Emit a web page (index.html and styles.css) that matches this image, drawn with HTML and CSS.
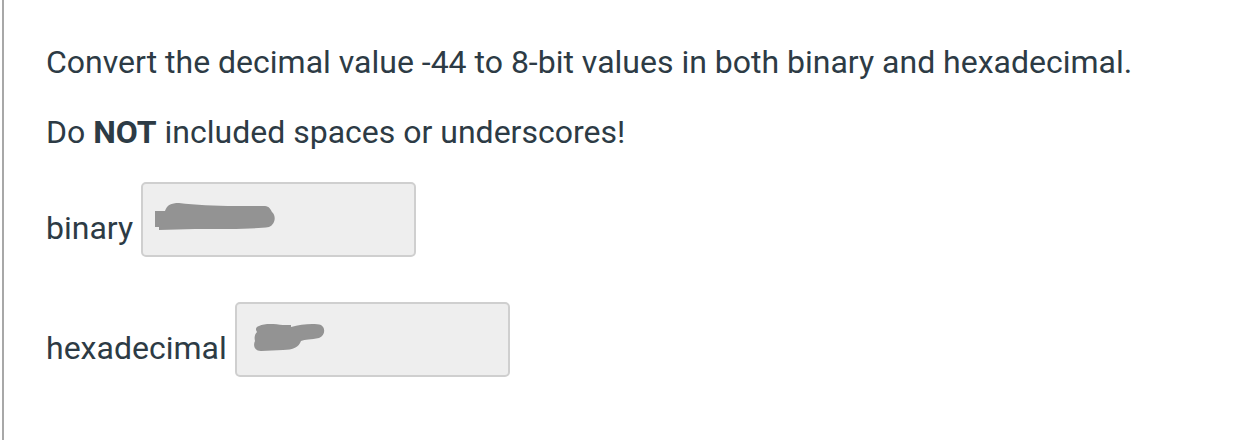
FILE: index.html
```html
<!DOCTYPE html>
<html>
<head>
<meta charset="utf-8">
<link rel="stylesheet" href="styles.css">
</head>
<body>
<div class="question">
  <p class="line">Convert the decimal value -44 to 8-bit values in both binary and hexadecimal.</p>
  <p class="line">Do <strong>NOT</strong> included spaces or underscores!</p>
  <div class="field binary-row">
    <span class="label">binary</span>
    <span class="box">
      <svg class="blob" width="120" height="28" viewBox="0 0 120 28">
        <path d="M0 8 L10 8 C12 2 16 0 24 0 C40 2 60 3 80 3 L110 3 C114 3 116 7 117 9 C121 12 121 21 114 24 C100 26 70 26 40 26 L4 27 L4 24 L0 24 Z" fill="#939393"/>
      </svg>
    </span>
  </div>
  <div class="field hex-row">
    <span class="label">hexadecimal</span>
    <span class="box">
      <svg class="blob" width="72" height="30" viewBox="0 0 72 30">
        <path d="M6 3 C12 0 22 1 30 2 L38 2 L38 4 C48 1 62 0 68 2 C73 5 72 13 66 15 C58 17 52 16 48 18 C46 24 40 27 30 27 L8 28 C1 28 0 22 2 18 C1 14 2 11 4 9 C2 6 3 4 6 3 Z" fill="#939393"/>
      </svg>
    </span>
  </div>
</div>
</body>
</html>
```
FILE: styles.css
```css
html, body {
  margin: 0;
  padding: 0;
  background: #ffffff;
}
body {
  font-family: Roboto, "Liberation Sans", sans-serif;
  color: #2d3b45;
  height: 440px;
  overflow: hidden;
}
.question {
  margin-left: 2px;
  border-left: 2px solid #a8a8a8;
  height: 440px;
  padding-left: 42px;
  box-sizing: border-box;
  padding-top: 43px;
}
.line {
  margin: 0 0 32px 0;
  font-size: 32px;
  line-height: 38px;
}
strong {
  font-weight: 700;
}
.field {
  display: flex;
  align-items: center;
  font-size: 32px;
  line-height: 38px;
}
.binary-row {
  margin-top: -1px;
}
.hex-row {
  margin-top: 45px;
}
.label {
  margin-right: 8px;
  padding-top: 16px;
}
.box {
  width: 275px;
  height: 75px;
  box-sizing: border-box;
  border: 2px solid #cfcfcf;
  border-radius: 5px;
  background: #eeeeee;
  display: flex;
  align-items: flex-start;
  padding-top: 19px;
}
.binary-row .box {
  padding-left: 12px;
}
.hex-row .box {
  padding-left: 16px;
}
```
